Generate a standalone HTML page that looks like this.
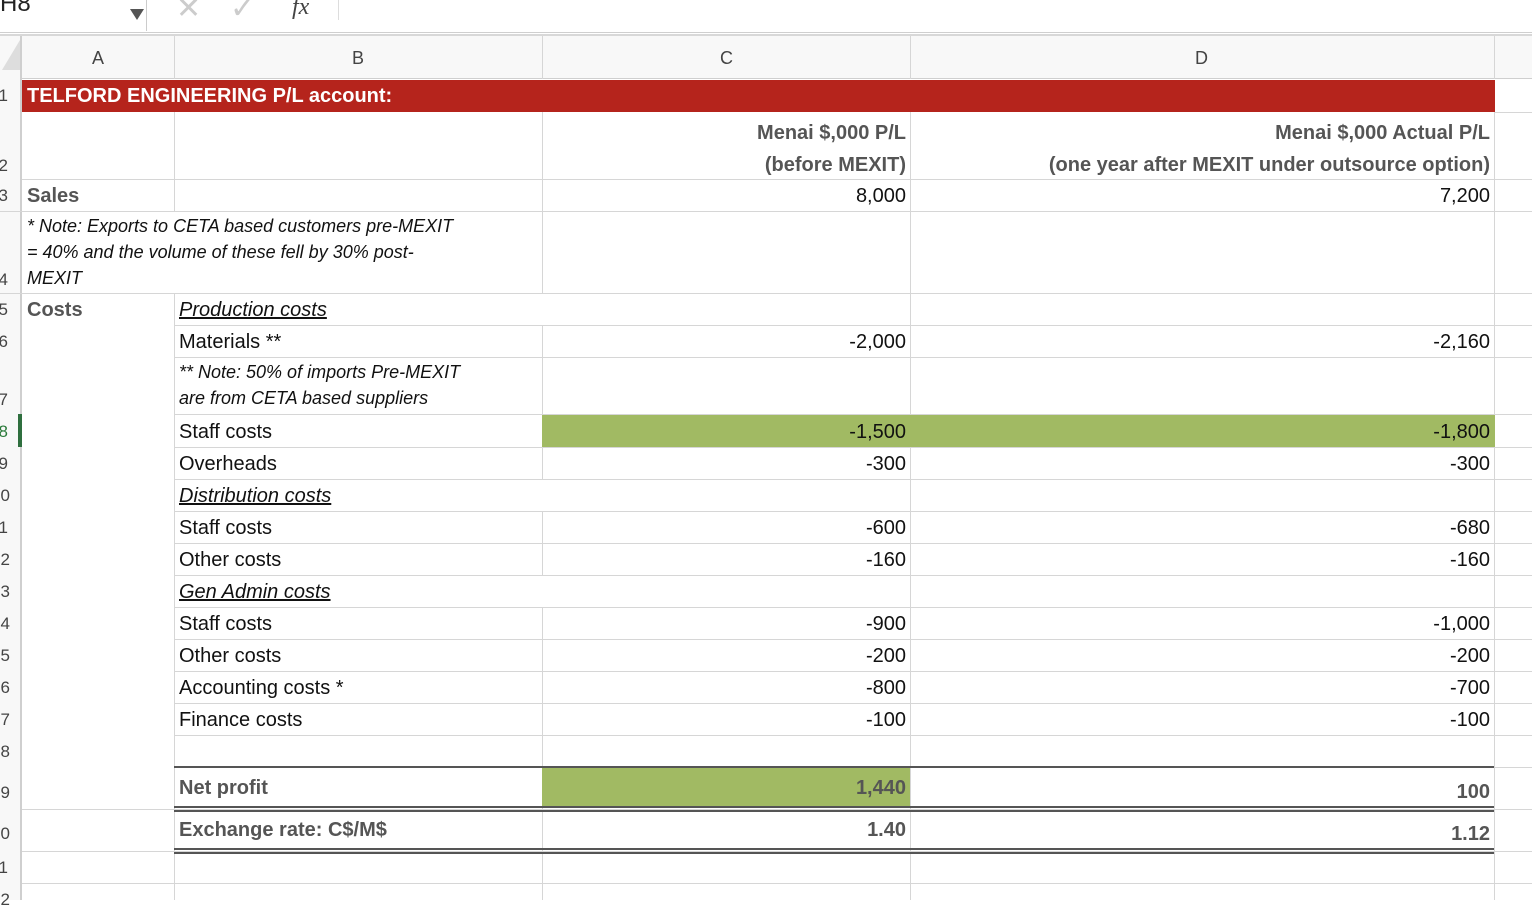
<!DOCTYPE html><html><head><meta charset="utf-8"><style>
*{margin:0;padding:0;box-sizing:border-box}
body{width:1532px;height:900px;overflow:hidden;background:#fff;font-family:"Liberation Sans",sans-serif;position:relative}
div{position:absolute}
.h{height:1px;background:#d6d6d6}
.v{width:1px;background:#d6d6d6}
.t{font-size:20px;color:#111;white-space:nowrap;line-height:24px;z-index:3}
.b{font-weight:bold;color:#555}
.r{text-align:right}
.i{font-style:italic;font-size:18px;line-height:26px}
.rn{left:0;width:14px;font-size:17px;color:#444;text-align:right;line-height:20px}
.dk{height:2px;background:#555}
.g{z-index:2;background:#a1ba63}
</style></head><body>
<div style="left:0;top:0;width:1532px;height:33px;background:#fff;border-bottom:1px solid #cfcfcf"></div>
<div style="left:0;top:-10px;font-size:24px;color:#222">H8</div>
<div style="left:130px;top:9px;width:0;height:0;border-left:7px solid transparent;border-right:7px solid transparent;border-top:11px solid #555"></div>
<div class="v" style="left:146px;top:0;height:31px;background:#ccc"></div>
<div style="left:176px;top:-9px;font-size:30px;color:#ccc">✕</div>
<div style="left:230px;top:-9px;font-size:30px;color:#ccc">✓</div>
<div style="left:292px;top:-6px;font-size:24px;font-style:italic;font-family:'Liberation Serif',serif;color:#444">fx</div>
<div class="v" style="left:338px;top:0;height:20px;background:#ddd"></div>
<div style="left:0;top:34px;width:1532px;height:2px;background:#d8d8d8"></div>
<div style="left:0;top:36px;width:1532px;height:43px;background:#f8f8f8;border-bottom:1px solid #cfcfcf"></div>
<div style="left:0;top:36px;width:22px;height:864px;background:#f8f8f8;border-right:2px solid #cfcfcf"></div>
<div style="left:2px;top:40px;width:0;height:0;border-bottom:30px solid #ddd;border-left:18px solid transparent"></div>
<div class="v" style="left:174px;top:36px;height:43px"></div>
<div class="v" style="left:542px;top:36px;height:43px"></div>
<div class="v" style="left:910px;top:36px;height:43px"></div>
<div class="v" style="left:1494px;top:36px;height:43px"></div>
<div class="t" style="left:92px;top:46px;font-size:18px;color:#444">A</div>
<div class="t" style="left:352px;top:46px;font-size:18px;color:#444">B</div>
<div class="t" style="left:720px;top:46px;font-size:18px;color:#444">C</div>
<div class="t" style="left:1195px;top:46px;font-size:18px;color:#444">D</div>
<div class="rn" style="top:86px;left:-6px">1</div>
<div class="rn" style="top:156px;left:-6px">2</div>
<div class="rn" style="top:186px;left:-6px">3</div>
<div class="rn" style="top:270px;left:-6px">4</div>
<div class="rn" style="top:300px;left:-6px">5</div>
<div class="rn" style="top:332px;left:-6px">6</div>
<div class="rn" style="top:390px;left:-6px">7</div>
<div class="rn" style="top:422px;left:-6px;color:#2a7a3a">8</div>
<div style="left:18px;top:414px;width:4px;height:33px;background:#2f6f3f"></div>
<div class="rn" style="top:454px;left:-6px">9</div>
<div class="rn" style="top:486px;left:-4px">0</div>
<div class="rn" style="top:518px;left:-6px">1</div>
<div class="rn" style="top:550px;left:-4px">2</div>
<div class="rn" style="top:582px;left:-4px">3</div>
<div class="rn" style="top:614px;left:-4px">4</div>
<div class="rn" style="top:646px;left:-4px">5</div>
<div class="rn" style="top:678px;left:-4px">6</div>
<div class="rn" style="top:710px;left:-4px">7</div>
<div class="rn" style="top:742px;left:-4px">8</div>
<div class="rn" style="top:783px;left:-4px">9</div>
<div class="rn" style="top:824px;left:-4px">0</div>
<div class="rn" style="top:858px;left:-6px">1</div>
<div class="rn" style="top:890px;left:-4px">2</div>
<div class="h" style="left:0;top:211px;width:22px"></div><div class="h" style="left:0;top:293px;width:22px"></div>
<div style="left:22px;top:80px;width:1473px;height:32px;background:#b5241c;z-index:2"></div>
<div class="g" style="left:542px;top:415px;width:953px;height:32px"></div>
<div class="g" style="left:542px;top:768px;width:368px;height:38px"></div>
<div class="h" style="left:22px;top:179px;width:1510px"></div>
<div class="h" style="left:22px;top:211px;width:1510px"></div>
<div class="h" style="left:22px;top:293px;width:1510px"></div>
<div class="h" style="left:174px;top:325px;width:1358px"></div>
<div class="h" style="left:174px;top:357px;width:1358px"></div>
<div class="h" style="left:174px;top:414px;width:1358px"></div>
<div class="h" style="left:174px;top:447px;width:1358px"></div>
<div class="h" style="left:174px;top:479px;width:1358px"></div>
<div class="h" style="left:174px;top:511px;width:1358px"></div>
<div class="h" style="left:174px;top:543px;width:1358px"></div>
<div class="h" style="left:174px;top:575px;width:1358px"></div>
<div class="h" style="left:174px;top:607px;width:1358px"></div>
<div class="h" style="left:174px;top:639px;width:1358px"></div>
<div class="h" style="left:174px;top:671px;width:1358px"></div>
<div class="h" style="left:174px;top:703px;width:1358px"></div>
<div class="h" style="left:174px;top:735px;width:1358px"></div>
<div class="h" style="left:1494px;top:767px;width:38px"></div>
<div class="h" style="left:22px;top:809px;width:1510px"></div>
<div class="h" style="left:22px;top:851px;width:1510px"></div>
<div class="h" style="left:22px;top:883px;width:1510px"></div>
<div class="h" style="left:1494px;top:112px;width:38px"></div>
<div class="v" style="left:174px;top:112px;height:99px"></div>
<div class="v" style="left:174px;top:293px;height:607px"></div>
<div class="v" style="left:542px;top:112px;height:181px"></div>
<div class="v" style="left:542px;top:325px;height:154px"></div>
<div class="v" style="left:542px;top:511px;height:64px"></div>
<div class="v" style="left:542px;top:607px;height:293px"></div>
<div class="v" style="left:910px;top:112px;height:788px"></div>
<div class="v" style="left:1494px;top:80px;height:820px"></div>
<div class="dk" style="left:174px;top:766px;width:1320px"></div>
<div class="dk" style="left:174px;top:806px;width:1320px;z-index:3"></div>
<div class="dk" style="left:174px;top:810px;width:1320px"></div>
<div class="dk" style="left:174px;top:848px;width:1320px"></div>
<div class="dk" style="left:174px;top:852px;width:1320px"></div>
<div class="t b" style="left:27px;top:84px;color:#fff">TELFORD ENGINEERING P/L account:</div>
<div class="t b r" style="right:626px;top:117px;line-height:32px">Menai $,000 P/L<br>(before MEXIT)</div>
<div class="t b r" style="right:42px;top:117px;line-height:32px">Menai $,000 Actual P/L<br>(one year after MEXIT under outsource option)</div>
<div class="t b" style="left:27px;top:184px">Sales</div>
<div class="t r" style="right:626px;top:184px">8,000</div>
<div class="t r" style="right:42px;top:184px">7,200</div>
<div class="t i" style="left:27px;top:213px">* Note: Exports to CETA based customers pre-MEXIT<br>= 40% and the volume of these fell by 30% post-<br>MEXIT</div>
<div class="t b" style="left:27px;top:298px">Costs</div>
<div class="t" style="left:179px;top:298px;font-style:italic;text-decoration:underline">Production costs</div>
<div class="t" style="left:179px;top:330px">Materials **</div>
<div class="t r" style="right:626px;top:330px">-2,000</div>
<div class="t r" style="right:42px;top:330px">-2,160</div>
<div class="t i" style="left:179px;top:359px">** Note: 50% of imports Pre-MEXIT<br>are from CETA based suppliers</div>
<div class="t" style="left:179px;top:420px">Staff costs</div>
<div class="t r" style="right:626px;top:420px">-1,500</div>
<div class="t r" style="right:42px;top:420px">-1,800</div>
<div class="t" style="left:179px;top:452px">Overheads</div>
<div class="t r" style="right:626px;top:452px">-300</div>
<div class="t r" style="right:42px;top:452px">-300</div>
<div class="t" style="left:179px;top:484px;font-style:italic;text-decoration:underline">Distribution costs</div>
<div class="t" style="left:179px;top:516px">Staff costs</div>
<div class="t r" style="right:626px;top:516px">-600</div>
<div class="t r" style="right:42px;top:516px">-680</div>
<div class="t" style="left:179px;top:548px">Other costs</div>
<div class="t r" style="right:626px;top:548px">-160</div>
<div class="t r" style="right:42px;top:548px">-160</div>
<div class="t" style="left:179px;top:580px;font-style:italic;text-decoration:underline">Gen Admin costs</div>
<div class="t" style="left:179px;top:612px">Staff costs</div>
<div class="t r" style="right:626px;top:612px">-900</div>
<div class="t r" style="right:42px;top:612px">-1,000</div>
<div class="t" style="left:179px;top:644px">Other costs</div>
<div class="t r" style="right:626px;top:644px">-200</div>
<div class="t r" style="right:42px;top:644px">-200</div>
<div class="t" style="left:179px;top:676px">Accounting costs *</div>
<div class="t r" style="right:626px;top:676px">-800</div>
<div class="t r" style="right:42px;top:676px">-700</div>
<div class="t" style="left:179px;top:708px">Finance costs</div>
<div class="t r" style="right:626px;top:708px">-100</div>
<div class="t r" style="right:42px;top:708px">-100</div>
<div class="t b" style="left:179px;top:776px">Net profit</div>
<div class="t b r" style="right:626px;top:776px">1,440</div>
<div class="t b r" style="right:42px;top:780px">100</div>
<div class="t b" style="left:179px;top:818px">Exchange rate: C$/M$</div>
<div class="t b r" style="right:626px;top:818px">1.40</div>
<div class="t b r" style="right:42px;top:822px">1.12</div>
</body></html>
